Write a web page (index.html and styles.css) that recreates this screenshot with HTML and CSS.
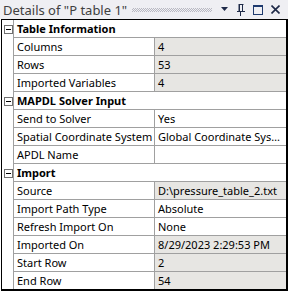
FILE: index.html
```html
<!DOCTYPE html>
<html lang="en">
<head>
    <meta charset="UTF-8">
    <title>Details of "P table 1"</title>
    <link rel="stylesheet" href="styles.css">
</head>
<body>
    <div class="panel">
        <div class="titlebar">
            <span class="title">Details of "P table 1"</span>
            <span class="grip"></span>
            <svg class="tool" width="8" height="5" viewBox="0 0 8 5"><path d="M0 0h7L3.5 4z" fill="#1e2a48"/></svg>
            <svg class="tool" width="8" height="12" viewBox="0 0 8 12">
                <path d="M1.5 0.5h5M2 1v6M5.5 1v6M0 7.5h8M3.5 8v4" stroke="#1e2a48" stroke-width="1" fill="none"/>
                <path d="M2.5 1v6" stroke="#1e2a48" stroke-width="1"/>
            </svg>
            <svg class="tool" width="10" height="10" viewBox="0 0 10 10"><rect x="0.5" y="1" width="9" height="8.5" fill="none" stroke="#1e3a6e" stroke-width="1"/><path d="M0 1h10" stroke="#1e3a6e" stroke-width="2"/></svg>
            <svg class="tool" width="9" height="9" viewBox="0 0 9 9"><path d="M0.5 0.5l8 8M8.5 0.5l-8 8" stroke="#1e2a48" stroke-width="1.6"/></svg>
        </div>
        <div class="grid">
            <div class="cat"><span class="gutter"><span class="toggle"></span></span><span class="cat-name">Table Information</span></div>
            <div class="row"><span class="gutter"></span><span class="name">Columns</span><span class="value ro">4</span></div>
            <div class="row"><span class="gutter"></span><span class="name">Rows</span><span class="value ro">53</span></div>
            <div class="row"><span class="gutter"></span><span class="name">Imported Variables</span><span class="value ro">4</span></div>

            <div class="cat"><span class="gutter"><span class="toggle"></span></span><span class="cat-name">MAPDL Solver Input</span></div>
            <div class="row"><span class="gutter"></span><span class="name">Send to Solver</span><span class="value">Yes</span></div>
            <div class="row"><span class="gutter"></span><span class="name">Spatial Coordinate System</span><span class="value">Global Coordinate System</span></div>
            <div class="row"><span class="gutter"></span><span class="name">APDL Name</span><span class="value"></span></div>

            <div class="cat"><span class="gutter"><span class="toggle"></span></span><span class="cat-name">Import</span></div>
            <div class="row"><span class="gutter"></span><span class="name">Source</span><span class="value ro">D:\pressure_table_2.txt</span></div>
            <div class="row"><span class="gutter"></span><span class="name">Import Path Type</span><span class="value">Absolute</span></div>
            <div class="row"><span class="gutter"></span><span class="name">Refresh Import On</span><span class="value">None</span></div>
            <div class="row"><span class="gutter"></span><span class="name">Imported On</span><span class="value ro">8/29/2023 2:29:53 PM</span></div>
            <div class="row"><span class="gutter"></span><span class="name">Start Row</span><span class="value ro">2</span></div>
            <div class="row"><span class="gutter"></span><span class="name">End Row</span><span class="value ro">54</span></div>
        </div>
    </div>
</body>
</html>
```

FILE: styles.css
```css
body { margin: 0; background: #fff; font-family: "Noto Sans", "Open Sans", sans-serif; font-size: 11px; color: #000; }

.panel { width: 288px; height: 291px; overflow: hidden; }

.titlebar {
    height: 19px;
    background: #efeff3;
    display: flex;
    align-items: center;
    padding-left: 3px;
    box-sizing: border-box;
}

.title {
    color: #404040;
    font-size: 13px;
    white-space: nowrap;
}

.grip {
    flex: 1;
    height: 4px;
    margin: 1px 9px 0 5px;
    background-image: conic-gradient(#b9b9c2 25%, transparent 0 50%, #b9b9c2 0 75%, transparent 0);
    background-size: 2px 2px;
}

.tool { flex: none; margin-right: 8px; }

.grid {
    border: 2px solid #000;
    border-top-width: 1px;
    border-left-width: 1px;
    margin-left: 1px;
}

.row, .cat {
    display: grid;
    grid-template-columns: 12px 141px 1fr;
    height: 18px;
}

.cat { grid-template-columns: 12px 1fr; }

.gutter {
    border-right: 1px solid #a0a0a0;
    display: flex;
    align-items: center;
    justify-content: center;
}

.name, .value, .cat-name {
    border-bottom: 1px solid #a0a0a0;
    padding-left: 3px;
    line-height: 17px;
    white-space: nowrap;
    overflow: hidden;
}

.name { border-right: 1px solid #a0a0a0; }

.value { text-overflow: ellipsis; padding-right: 4px; }

.ro { background: #e7e6e3; }

.cat-name { font-weight: bold; }

.grid > div:last-child .name,
.grid > div:last-child .value { border-bottom: none; }
.grid > div:last-child { height: 17px; }

.toggle {
    position: relative;
    width: 7px;
    height: 7px;
    border: 1px solid #707070;
    background: #fff;
    margin-left: 1px;
}

.toggle::after {
    content: "";
    position: absolute;
    left: 1px;
    top: 3px;
    width: 5px;
    height: 1px;
    background: #000;
}
```
